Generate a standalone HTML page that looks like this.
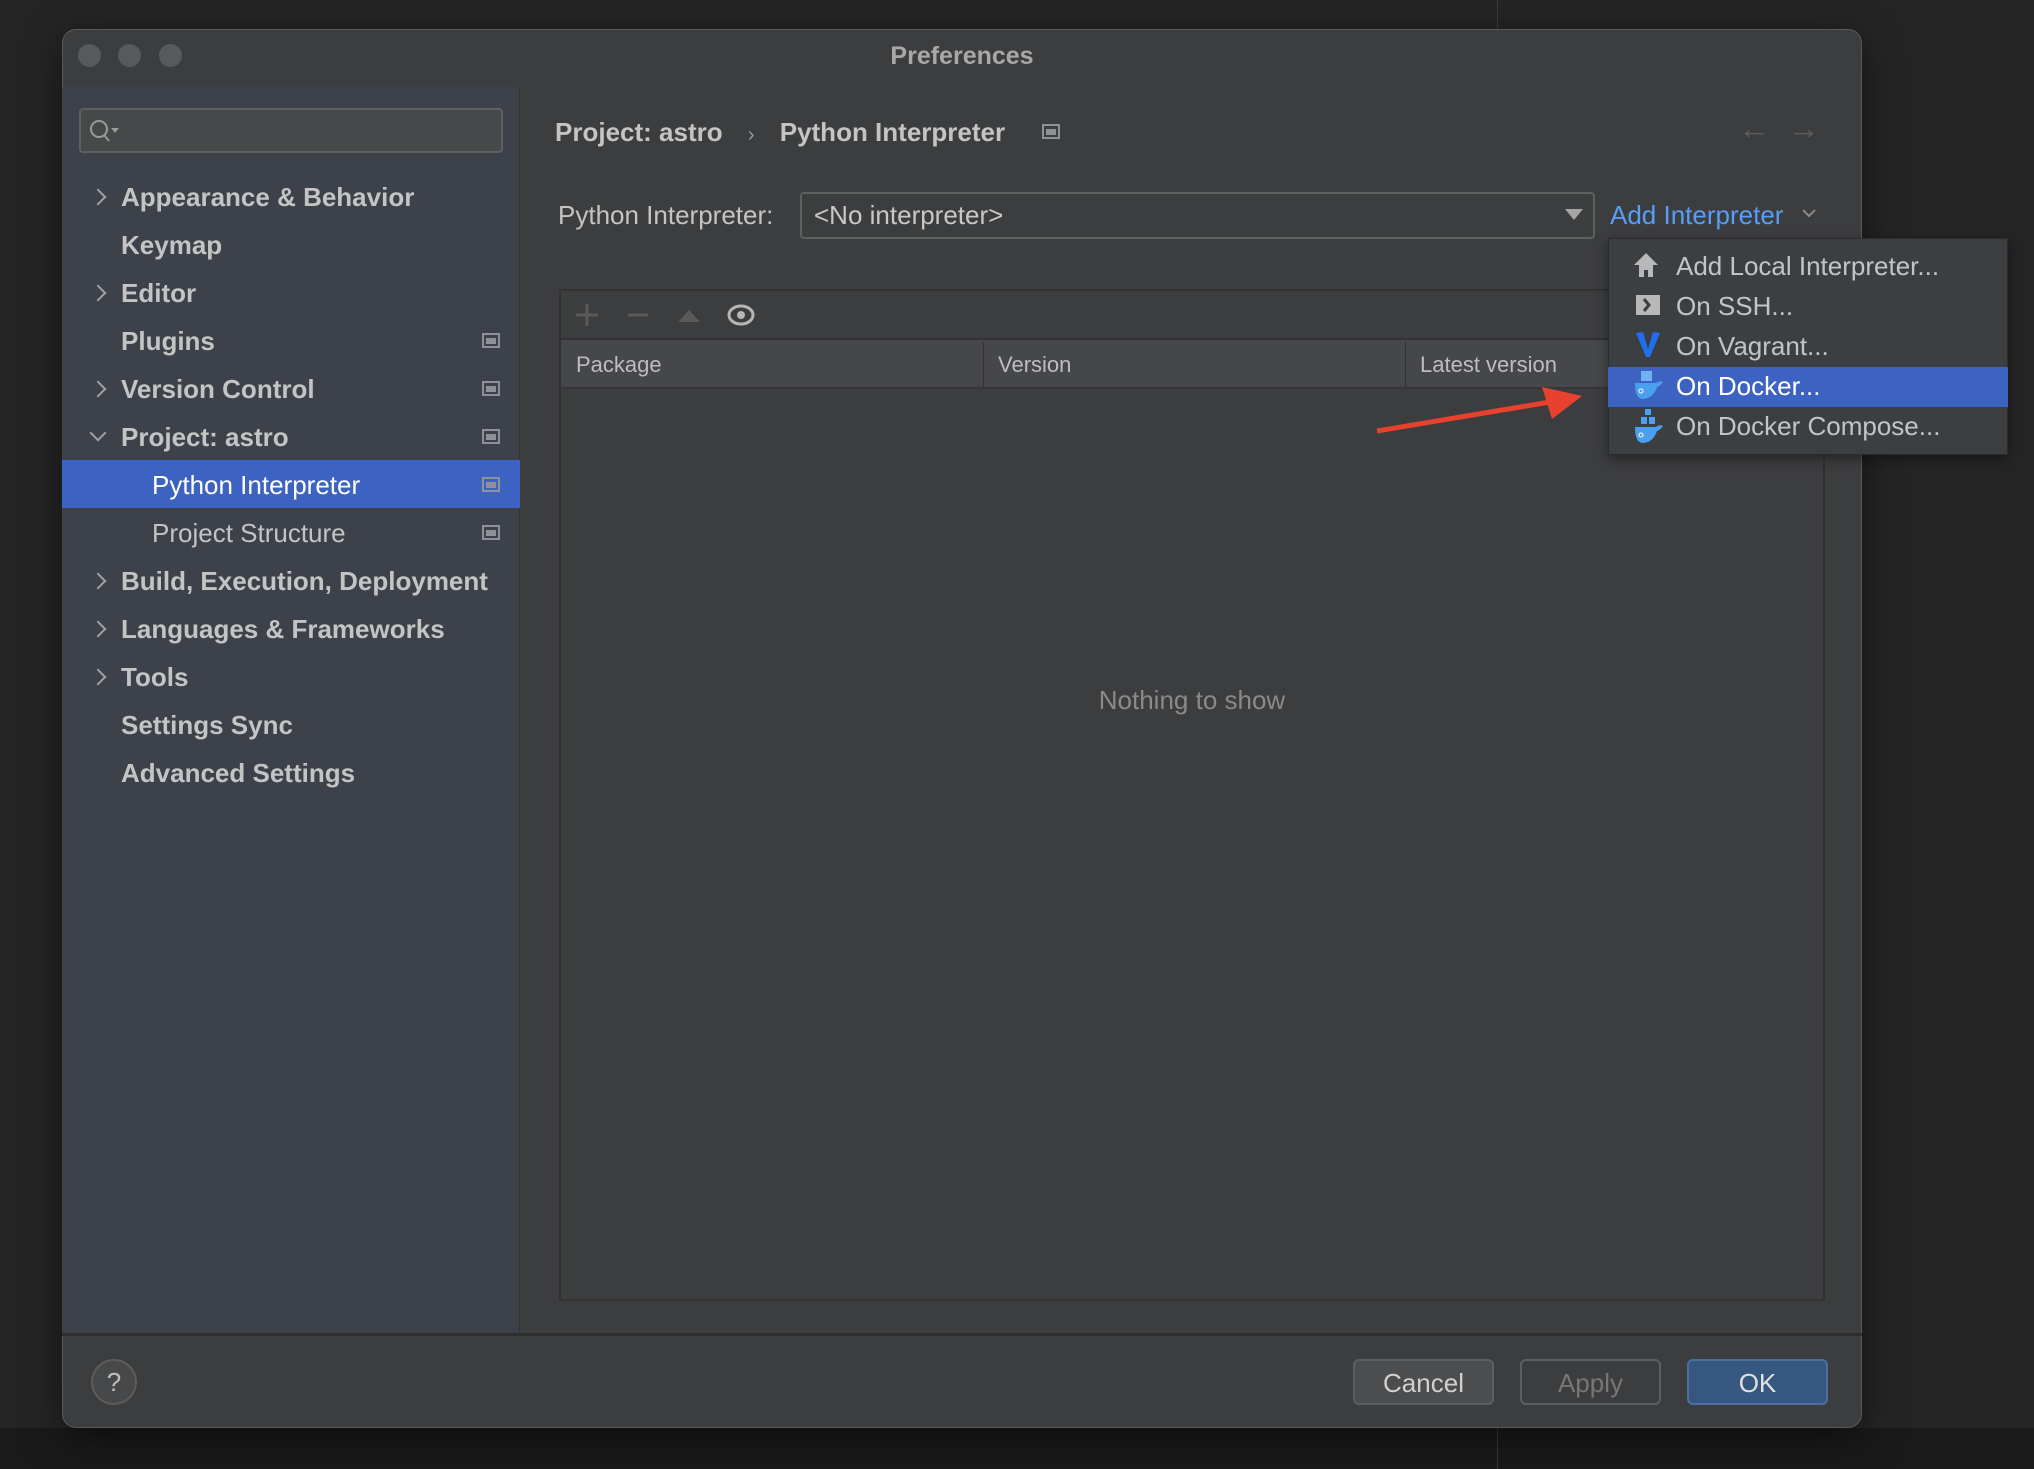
<!DOCTYPE html>
<html><head><meta charset="utf-8"><style>
*{margin:0;padding:0;box-sizing:border-box}
body{width:2034px;height:1469px;background:#252526;position:relative;overflow:hidden;font-family:"Liberation Sans",sans-serif;color:#bbbbbb}
.a{position:absolute}
.bg2{left:0;top:1428px;width:2034px;height:41px;background:#1a1a1a}
.vl{left:1497px;top:0;width:1px;height:1469px;background:#3a3a3a}
.win{left:62px;top:29px;width:1800px;height:1399px;background:#3c3d3f;border-radius:14px;overflow:hidden;border:1px solid #5a5a5a;box-shadow:0 10px 40px rgba(0,0,0,.5)}
.tl{width:23px;height:23px;border-radius:50%;background:#58595b;top:44px}
.side{left:62px;top:87px;width:458px;height:1248px;background:#3d414a;border-right:1px solid #333}
.it{font-size:26px;font-weight:bold;color:#c4c4c4;height:48px;line-height:48px;left:121px}
.ch{left:92px;width:12px;height:12px;border-right:2px solid #a0a0a0;border-bottom:2px solid #a0a0a0;transform:rotate(-45deg)}
.ic{left:482px;width:18px;height:15px;border:2px solid #8e9197}
.ic:after{content:"";position:absolute;left:2px;top:3px;width:10px;height:6px;background:#8e9197}
.pi{font-size:26px}
.btn{top:1359px;height:46px;width:141px;border-radius:6px;font-size:26px;text-align:center;line-height:44px}
.mi{left:1676px;font-size:26px;color:#c4c4c4;height:40px;line-height:40px}
</style></head><body>
<div class="a bg2"></div>
<div class="a vl"></div>
<div class="a win"></div>
<div class="a tl" style="left:78px"></div>
<div class="a tl" style="left:118px"></div>
<div class="a tl" style="left:159px"></div>
<div class="a" style="left:62px;top:42px;width:1800px;text-align:center;font-size:25px;font-weight:bold;color:#a8a8a8">Preferences</div>
<div class="a side"></div>
<div class="a" style="left:79px;top:108px;width:424px;height:45px;background:#45494a;border:2px solid #5e6060;border-radius:4px"></div>
<svg class="a" style="left:88px;top:118px" width="36" height="26"><circle cx="11" cy="11" r="8" stroke="#9a9a9a" stroke-width="2" fill="none"/><line x1="16" y1="17" x2="21" y2="23" stroke="#9a9a9a" stroke-width="2"/><path d="M23 10 L31 10 L27 15Z" fill="#9a9a9a"/></svg>

<div class="a" style="left:62px;top:460px;width:458px;height:48px;background:#3d63c2"></div>
<div class="a ch" style="top:191px"></div><div class="a it" style="top:173px">Appearance &amp; Behavior</div>
<div class="a it" style="top:221px">Keymap</div>
<div class="a ch" style="top:287px"></div><div class="a it" style="top:269px">Editor</div>
<div class="a it" style="top:317px">Plugins</div><div class="a ic" style="top:333px"></div>
<div class="a ch" style="top:383px"></div><div class="a it" style="top:365px">Version Control</div><div class="a ic" style="top:381px"></div>
<div class="a ch" style="top:427px;transform:rotate(45deg)"></div><div class="a it" style="top:413px">Project: astro</div><div class="a ic" style="top:429px"></div>
<div class="a it" style="top:461px;left:152px;font-weight:normal;color:#fff">Python Interpreter</div><div class="a ic" style="top:477px"></div>
<div class="a it" style="top:509px;left:152px;font-weight:normal">Project Structure</div><div class="a ic" style="top:525px"></div>
<div class="a ch" style="top:575px"></div><div class="a it" style="top:557px">Build, Execution, Deployment</div>
<div class="a ch" style="top:623px"></div><div class="a it" style="top:605px">Languages &amp; Frameworks</div>
<div class="a ch" style="top:671px"></div><div class="a it" style="top:653px">Tools</div>
<div class="a it" style="top:701px">Settings Sync</div>
<div class="a it" style="top:749px">Advanced Settings</div>

<div class="a" style="left:555px;top:117px;font-size:26px;font-weight:bold;color:#c4c4c4">Project: astro <span style="font-weight:normal;font-size:20px;color:#999;margin:0 18px">›</span> Python Interpreter</div>
<div class="a ic" style="left:1042px;top:124px"></div>
<div class="a" style="left:1738px;top:110px;font-size:32px;font-weight:bold;color:#5d5d5d">←&nbsp;&nbsp;→</div>

<div class="a pi" style="left:558px;top:200px;color:#c4c4c4">Python Interpreter:</div>
<div class="a" style="left:800px;top:192px;width:795px;height:47px;border:2px solid #5e6060;border-radius:4px;background:#3c3d3f"></div>
<div class="a pi" style="left:814px;top:200px;color:#c8c8c8">&lt;No interpreter&gt;</div>
<svg class="a" style="left:1564px;top:207px" width="20" height="14"><path d="M1 2 H19 L10 13Z" fill="#a5a5a5"/></svg>
<div class="a pi" style="left:1610px;top:200px;color:#589df6">Add Interpreter</div>
<svg class="a" style="left:1802px;top:209px" width="14" height="10"><path d="M1 1 L7 7 L13 1" stroke="#8a8a8a" stroke-width="2" fill="none"/></svg>

<div class="a" style="left:559px;top:289px;width:1266px;height:1012px;border:2px solid #323232;background:#3c3d3f"></div>
<div class="a" style="left:561px;top:338px;width:1262px;height:2px;background:#323232"></div>
<div class="a" style="left:561px;top:340px;width:1262px;height:49px;background:#45474a;border-bottom:2px solid #363636"></div>
<div class="a" style="left:983px;top:342px;width:1px;height:45px;background:#323232"></div>
<div class="a" style="left:1405px;top:342px;width:1px;height:45px;background:#323232"></div>
<div class="a" style="left:576px;top:352px;font-size:22px;color:#bdbdbd">Package</div>
<div class="a" style="left:998px;top:352px;font-size:22px;color:#bdbdbd">Version</div>
<div class="a" style="left:1420px;top:352px;font-size:22px;color:#bdbdbd">Latest version</div>
<svg class="a" style="left:574px;top:300px" width="200" height="30"><path d="M13 4 V26 M2 15 H24" stroke="#5a5a5a" stroke-width="3"/><path d="M54 15 H74" stroke="#5a5a5a" stroke-width="3"/><path d="M104 22 L115 10 L126 22Z" fill="#5a5a5a"/><ellipse cx="167" cy="15" rx="12" ry="9" stroke="#b5b5b5" stroke-width="3" fill="none"/><circle cx="167" cy="15" r="4" fill="#b5b5b5"/></svg>
<div class="a" style="left:559px;top:685px;width:1266px;text-align:center;font-size:26px;color:#8a8a8a">Nothing to show</div>

<div class="a" style="left:62px;top:1333px;width:1800px;height:3px;background:#2f2f2f"></div>
<div class="a" style="left:91px;top:1359px;width:46px;height:46px;border-radius:50%;border:2px solid #5c5c5c;background:#474849;text-align:center;line-height:42px;font-size:26px;color:#c0c0c0">?</div>
<div class="a btn" style="left:1353px;background:#4b4d4f;border:2px solid #5c5e60;color:#d0d0d0">Cancel</div>
<div class="a btn" style="left:1520px;background:#3c3d3f;border:2px solid #5c5e60;color:#777">Apply</div>
<div class="a btn" style="left:1687px;background:#365880;border:2px solid #4a6fa0;color:#e0e0e0">OK</div>

<svg class="a" style="left:1370px;top:380px" width="230" height="70"><line x1="7" y1="51" x2="180" y2="22" stroke="#e8412d" stroke-width="5"/><path d="M212 16 L172 7 L182 39Z" fill="#e8412d"/></svg>

<div class="a" style="left:1608px;top:238px;width:400px;height:217px;background:#3c3f41;border:1px solid #2b2b2b;box-shadow:0 4px 12px rgba(0,0,0,.4)"></div>
<div class="a" style="left:1608px;top:367px;width:400px;height:40px;background:#3d63c2"></div>
<svg class="a" style="left:1632px;top:247px" width="36" height="200">
<path d="M14 6 L2 18 H7 V30 H12 V23 H16 V30 H21 V18 H26Z" fill="#b8b8b8"/>
<rect x="4" y="48" width="24" height="20" fill="#b8b8b8"/><path d="M12 52 L17 58 L12 64" stroke="#3c3f41" stroke-width="3" fill="none"/>
<path d="M4 86 L11 85 L16 102 L21 85 L28 86 L18 110 H14Z" fill="#1f6ff0"/>
<rect x="9" y="124" width="11" height="10" fill="#6fb3f5"/><path d="M3 136 H24 Q28 133 31 135 Q28 139 25 140 Q21 152 10 152 Q3 151 3 136Z" fill="#4a9ff0"/><circle cx="9" cy="144" r="2" stroke="#fff" fill="none"/>
<rect x="13" y="162" width="6" height="6" fill="#4a9ff0"/><rect x="9" y="170" width="6" height="7" fill="#4a9ff0"/><rect x="17" y="170" width="6" height="7" fill="#4a9ff0"/><path d="M3 180 H24 Q28 177 31 179 Q28 183 25 184 Q21 196 10 196 Q3 195 3 180Z" fill="#4a9ff0"/><circle cx="9" cy="188" r="2" stroke="#fff" fill="none"/>
</svg>
<div class="a mi" style="top:246px">Add Local Interpreter...</div>
<div class="a mi" style="top:286px">On SSH...</div>
<div class="a mi" style="top:326px">On Vagrant...</div>
<div class="a mi" style="top:366px;color:#fff">On Docker...</div>
<div class="a mi" style="top:406px">On Docker Compose...</div>
</body></html>
